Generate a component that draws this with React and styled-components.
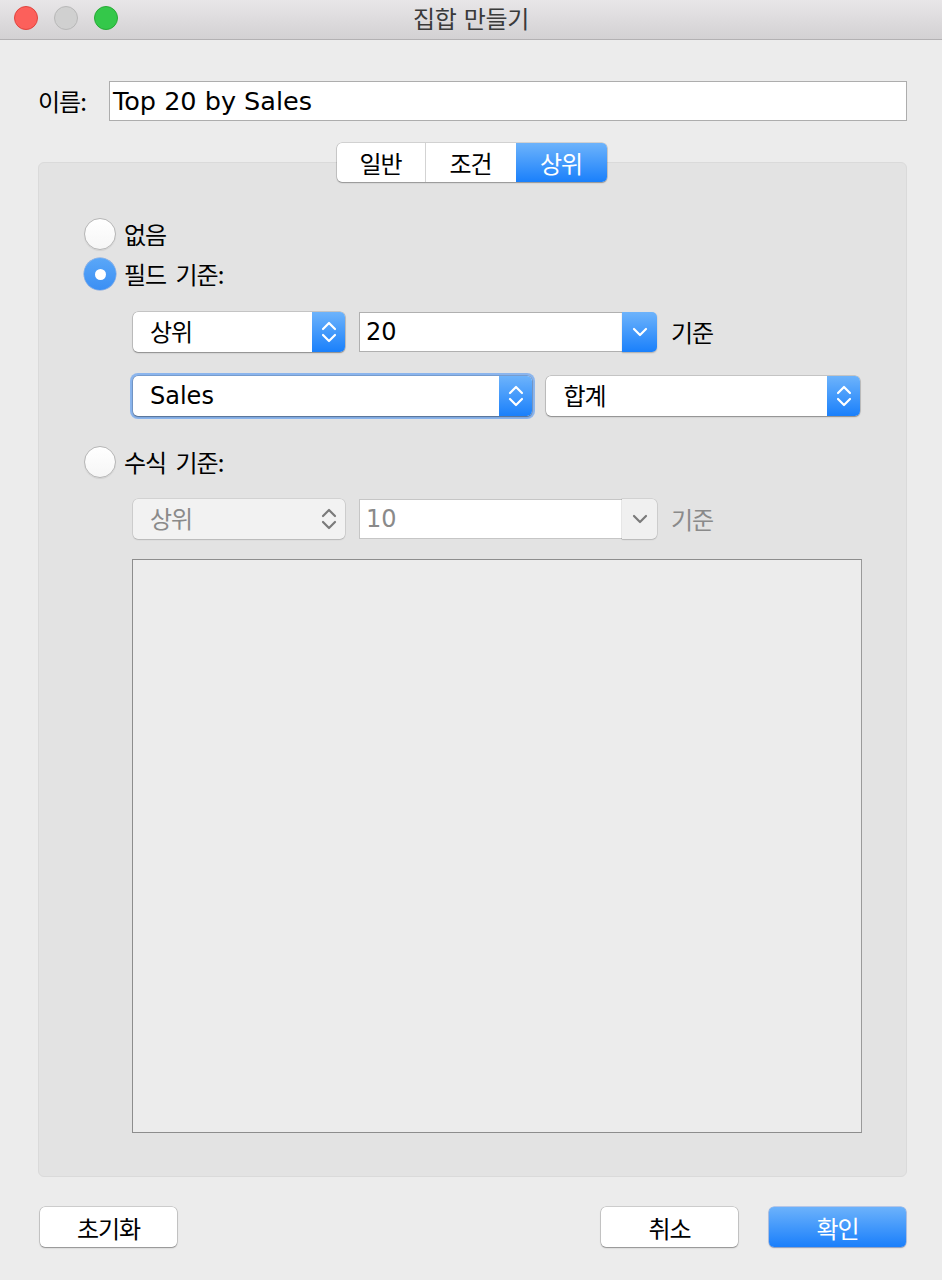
import React from "react";
import styled, { createGlobalStyle, css } from "styled-components";

const Global = createGlobalStyle`
  html, body { margin: 0; padding: 0; background: #ececec; }
  body { font-family: "DejaVu Sans", "Noto Sans CJK KR", sans-serif; color: #000; }
  * { box-sizing: border-box; }
`;

const KR = `"Noto Sans CJK KR", sans-serif`;

const Window = styled.div`
  width: 942px;
  height: 1280px;
  background: #ececec;
  display: flex;
  flex-direction: column;
`;

const TitleBar = styled.div`
  height: 40px;
  flex: none;
  display: flex;
  align-items: center;
  position: relative;
  background: linear-gradient(#e8e6e8, #d3d1d3);
  border-bottom: 1px solid #b3b1b3;
`;

const Lights = styled.div`
  display: flex;
  gap: 16px;
  padding-left: 14px;
  margin-top: -4px;
`;

const Light = styled.span`
  width: 24px;
  height: 24px;
  border-radius: 50%;
  background: ${(p) => p.$bg};
  border: 1px solid ${(p) => p.$bd};
`;

const Title = styled.div`
  position: absolute;
  left: 0;
  right: 0;
  top: 0px;
  text-align: center;
  font-family: ${KR};
  font-size: 24px;
  letter-spacing: -0.3px;
  word-spacing: 2px;
  color: #3a3a3a;
  pointer-events: none;
`;

const Body = styled.div`
  flex: 1;
  display: flex;
  flex-direction: column;
  padding: 41px 35px 0 38px;
`;

const NameRow = styled.div`
  display: flex;
  align-items: center;
`;

const Label = styled.span`
  font-family: ${KR};
  font-size: 24px;
  letter-spacing: -1px;
  word-spacing: 5px;
  color: ${(p) => (p.$disabled ? "#8a8a8a" : "#000")};
  line-height: 1;
`;

const NameLabel = styled(Label)`
  width: 71px;
  flex: none;
`;

const NameInput = styled.div`
  flex: 1;
  height: 40px;
  background: #fff;
  border: 1px solid #adadad;
  display: flex;
  align-items: center;
  padding-left: 3px;
  font-size: 25.5px;
  font-family: "DejaVu Sans", sans-serif;
`;

const TabsRow = styled.div`
  display: flex;
  justify-content: center;
  margin-top: 22px;
  margin-bottom: -20px;
  padding-right: 2px;
  position: relative;
  z-index: 2;
`;

const Segmented = styled.div`
  display: flex;
  height: 39px;
  border-radius: 5px;
  background: #fff;
  box-shadow: 0 0 0 0.5px rgba(0, 0, 0, 0.22), 0 1px 1.5px rgba(0, 0, 0, 0.28);
  overflow: hidden;
`;

const Seg = styled.div`
  width: ${(p) => p.$w}px;
  display: flex;
  align-items: center;
  justify-content: center;
  font-family: ${KR};
  font-size: 24px;
  letter-spacing: -1px;
  border-left: ${(p) => (p.$first ? "none" : "1px solid #d3d3d3")};
  ${(p) =>
    p.$active &&
    css`
      background: linear-gradient(#6db3fb, #1a80fb);
      color: #fff;
      border-left: none;
    `}
`;

const Panel = styled.div`
  height: 1015px;
  width: 869px;
  background: #e3e3e3;
  border: 1px solid #dadada;
  border-radius: 6px;
  padding: 55px 46px 0 45px;
  display: flex;
  flex-direction: column;
`;

const RadioRow = styled.div`
  display: flex;
  align-items: center;
  gap: 8px;
  height: 32px;
  margin-top: ${(p) => p.$mt || 0}px;
`;

const Radio = styled.span`
  width: 32px;
  height: 32px;
  border-radius: 50%;
  display: flex;
  align-items: center;
  justify-content: center;
  ${(p) =>
    p.$checked
      ? css`
          background: linear-gradient(#5aa7f8, #3b8ff4);
          box-shadow: 0 0 0 0.5px rgba(40, 110, 220, 0.6);
          &::after {
            content: "";
            width: 11px;
            height: 11px;
            border-radius: 50%;
            background: #fff;
          }
        `
      : css`
          background: linear-gradient(#ffffff, #f6f6f6);
          border: 1px solid #b6b6b6;
          box-shadow: 0 1px 1px rgba(0, 0, 0, 0.08);
        `}
`;

const ControlRow = styled.div`
  display: flex;
  align-items: center;
  gap: 14px;
  padding-left: 49px;
  margin-top: ${(p) => p.$mt || 0}px;
`;

const Popup = styled.div`
  width: ${(p) => p.$w}px;
  height: 40px;
  display: flex;
  border-radius: 5px;
  overflow: hidden;
  background: ${(p) => (p.$disabled ? "#f2f2f2" : "#fff")};
  box-shadow: 0 0 0 0.5px rgba(0, 0, 0, ${(p) => (p.$disabled ? 0.15 : 0.25)}),
    0 1px 1.5px rgba(0, 0, 0, ${(p) => (p.$disabled ? 0.12 : 0.3)})
    ${(p) => (p.$focus ? ", 0 0 0 3px rgba(110, 165, 240, 0.75)" : "")};
`;

const PopupText = styled.div`
  flex: 1;
  display: flex;
  align-items: center;
  padding-left: ${(p) => p.$pl || 17}px;
  padding-bottom: ${(p) => (p.$latin ? 0 : 3)}px;
  font-family: ${(p) => (p.$latin ? `"DejaVu Sans", sans-serif` : KR)};
  font-size: 24px;
  letter-spacing: ${(p) => (p.$latin ? 0 : -1)}px;
  color: ${(p) => (p.$disabled ? "#8a8a8a" : "#000")};
`;

const ArrowBox = styled.div`
  width: ${(p) => p.$w || 33}px;
  display: flex;
  align-items: center;
  justify-content: center;
  background: ${(p) =>
    p.$disabled ? "transparent" : "linear-gradient(#6db3fb, #1a80fb)"};
`;

const Combo = styled.div`
  width: ${(p) => p.$w}px;
  height: 40px;
  display: flex;
`;

const ComboField = styled.div`
  flex: 1;
  background: #fff;
  border: 1px solid ${(p) => (p.$disabled ? "#c6c6c6" : "#b0b0b0")};
  border-right: none;
  display: flex;
  align-items: center;
  padding-left: 6px;
  font-size: 24px;
  color: ${(p) => (p.$disabled ? "#8a8a8a" : "#000")};
  font-family: "DejaVu Sans", sans-serif;
`;

const ComboButton = styled.div`
  width: 35px;
  border-radius: 0 5px 5px 0;
  display: flex;
  align-items: center;
  justify-content: center;
  ${(p) =>
    p.$disabled
      ? css`
          background: #f0f0f0;
          box-shadow: 0 0 0 0.5px rgba(0, 0, 0, 0.15), 0 1px 1.5px rgba(0, 0, 0, 0.12);
        `
      : css`
          background: linear-gradient(#6db3fb, #1a80fb);
          box-shadow: 0 1px 1.5px rgba(0, 0, 0, 0.25);
        `}
`;

const FormulaBox = styled.div`
  margin: 20px 0 0 48px;
  width: 730px;
  height: 574px;
  background: #ececec;
  border: 1px solid #8d8d8d;
  border-right-color: #9a9a9a;
`;

const Footer = styled.div`
  display: flex;
  align-items: center;
  margin-top: 30px;
  padding: 0 1px 0 2px;
  gap: 31px;
`;

const Spacer = styled.div`
  flex: 1;
`;

const Button = styled.div`
  width: 137px;
  height: 40px;
  border-radius: 5px;
  display: flex;
  align-items: center;
  justify-content: center;
  font-family: ${KR};
  font-size: 24px;
  letter-spacing: -1px;
  ${(p) =>
    p.$primary
      ? css`
          background: linear-gradient(#6cb2fb, #1a7ffb);
          color: #fff;
          box-shadow: 0 0 0 0.5px rgba(20, 90, 220, 0.5), 0 1px 1.5px rgba(0, 0, 0, 0.25);
        `
      : css`
          background: #fff;
          color: #000;
          box-shadow: 0 0 0 0.5px rgba(0, 0, 0, 0.25), 0 1px 1.5px rgba(0, 0, 0, 0.3);
        `}
`;

const UpDown = ({ color = "#fff" }) => (
  <svg width="18" height="26" viewBox="0 0 18 26">
    <path d="M3 10 L9 4 L15 10" fill="none" stroke={color} strokeWidth="2.2" strokeLinecap="round" strokeLinejoin="round" />
    <path d="M3 16 L9 22 L15 16" fill="none" stroke={color} strokeWidth="2.2" strokeLinecap="round" strokeLinejoin="round" />
  </svg>
);

const Down = ({ color = "#fff" }) => (
  <svg width="18" height="12" viewBox="0 0 18 12">
    <path d="M3 3 L9 9 L15 3" fill="none" stroke={color} strokeWidth="2.2" strokeLinecap="round" strokeLinejoin="round" />
  </svg>
);

export default function App() {
  return (
    <>
      <Global />
      <Window>
        <TitleBar>
          <Lights>
            <Light $bg="#fc605b" $bd="#e0443e" />
            <Light $bg="#d0d0d0" $bd="#b8b8b8" />
            <Light $bg="#34c84a" $bd="#27aa35" />
          </Lights>
          <Title>집합 만들기</Title>
        </TitleBar>
        <Body>
          <NameRow>
            <NameLabel>이름:</NameLabel>
            <NameInput>Top 20 by Sales</NameInput>
          </NameRow>
          <TabsRow>
            <Segmented>
              <Seg $w={88} $first>일반</Seg>
              <Seg $w={91}>조건</Seg>
              <Seg $w={91} $active>상위</Seg>
            </Segmented>
          </TabsRow>
          <Panel>
            <RadioRow>
              <Radio />
              <Label>없음</Label>
            </RadioRow>
            <RadioRow $mt={8}>
              <Radio $checked />
              <Label>필드 기준:</Label>
            </RadioRow>
            <ControlRow $mt={22}>
              <Popup $w={212}>
                <PopupText>상위</PopupText>
                <ArrowBox><UpDown /></ArrowBox>
              </Popup>
              <Combo $w={298}>
                <ComboField>20</ComboField>
                <ComboButton><Down /></ComboButton>
              </Combo>
              <Label>기준</Label>
            </ControlRow>
            <ControlRow $mt={24}>
              <Popup $w={400} $focus>
                <PopupText $latin>Sales</PopupText>
                <ArrowBox><UpDown /></ArrowBox>
              </Popup>
              <Popup $w={314}>
                <PopupText>합계</PopupText>
                <ArrowBox><UpDown /></ArrowBox>
              </Popup>
            </ControlRow>
            <RadioRow $mt={30}>
              <Radio />
              <Label>수식 기준:</Label>
            </RadioRow>
            <ControlRow $mt={21}>
              <Popup $w={212} $disabled>
                <PopupText $disabled>상위</PopupText>
                <ArrowBox $disabled><UpDown color="#7a7a7a" /></ArrowBox>
              </Popup>
              <Combo $w={298}>
                <ComboField $disabled>10</ComboField>
                <ComboButton $disabled><Down color="#7a7a7a" /></ComboButton>
              </Combo>
              <Label $disabled>기준</Label>
            </ControlRow>
            <FormulaBox />
          </Panel>
          <Footer>
            <Button>초기화</Button>
            <Spacer />
            <Button>취소</Button>
            <Button $primary>확인</Button>
          </Footer>
        </Body>
      </Window>
    </>
  );
}
